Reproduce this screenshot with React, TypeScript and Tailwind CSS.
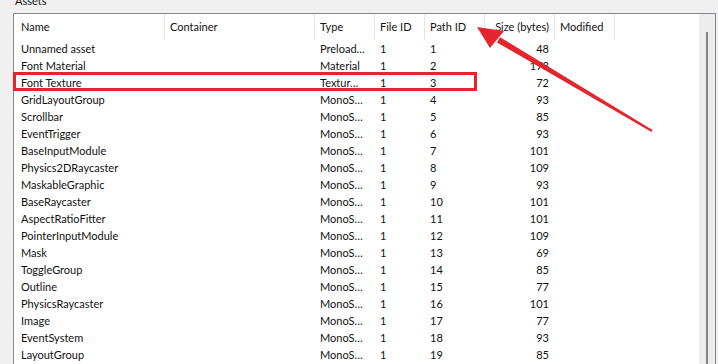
import React from "react";

type Col = { key: string; label: string; w: string; right?: boolean; pl: string };

const cols: Col[] = [
  { key: "name", label: "Name", w: "w-[151px]", pl: "pl-[7px]" },
  { key: "container", label: "Container", w: "w-[150px]", pl: "pl-[5px]" },
  { key: "type", label: "Type", w: "w-[60px]", pl: "pl-[5px]" },
  { key: "file", label: "File ID", w: "w-[50px]", pl: "pl-[5px]" },
  { key: "path", label: "Path ID", w: "w-[60px]", pl: "pl-[5px]" },
  { key: "size", label: "Size (bytes)", w: "w-[70px]", right: true, pl: "pl-[5px]" },
  { key: "modified", label: "Modified", w: "w-[60px]", pl: "pl-[5px]" },
];

const rows: [string, string, number][] = [
  ["Unnamed asset", "Preload…", 48],
  ["Font Material", "Material", 173],
  ["Font Texture", "Textur…", 72],
  ["GridLayoutGroup", "MonoS…", 93],
  ["Scrollbar", "MonoS…", 85],
  ["EventTrigger", "MonoS…", 93],
  ["BaseInputModule", "MonoS…", 101],
  ["Physics2DRaycaster", "MonoS…", 109],
  ["MaskableGraphic", "MonoS…", 93],
  ["BaseRaycaster", "MonoS…", 101],
  ["AspectRatioFitter", "MonoS…", 101],
  ["PointerInputModule", "MonoS…", 109],
  ["Mask", "MonoS…", 69],
  ["ToggleGroup", "MonoS…", 85],
  ["Outline", "MonoS…", 77],
  ["PhysicsRaycaster", "MonoS…", 101],
  ["Image", "MonoS…", 77],
  ["EventSystem", "MonoS…", 93],
  ["LayoutGroup", "MonoS…", 85],
];

const Annotations = () => (
  <svg
    className="absolute inset-0 pointer-events-none"
    width={718}
    height={364}
    viewBox="0 0 718 364"
  >
    <rect x={14.5} y={73.5} width={461} height={16} fill="none" stroke="#e3262e" strokeWidth={3} />
    <polygon points="500,37.2 497,42.4 651.5,131.9 652.5,130.1" fill="#e3262e" />
    <polygon points="477,27 504,31 490,48" fill="#e3262e" />
  </svg>
);

const App = () => {
  return (
    <div
      className="relative w-[718px] h-[364px] overflow-hidden bg-[#f0f0f0] text-[#111] text-[11px]"
      style={{ fontFamily: "Lato, 'Noto Sans', sans-serif" }}
    >
      <div className="h-[13px] overflow-hidden">
        <div className="-mt-[7px] pl-[15px] leading-[15px]">Assets</div>
      </div>
      <div className="ml-[13px] w-[703px] h-[360px] border border-[#828790] bg-white flex">
        <div className="flex-1 flex flex-col">
          {/* header */}
          <div className="flex h-[26px]">
            {cols.map((c) => (
              <div
                key={c.key}
                className={`${c.w} ${c.pl} pr-[5px] flex items-center border-r border-[#e5e5e5] whitespace-nowrap ${
                  c.right ? "justify-end" : ""
                }`}
              >
                {c.label}
              </div>
            ))}
          </div>
          {rows.map(([name, type, size], i) => (
            <div key={i} className="flex h-[17px] items-center leading-[17px] whitespace-nowrap">
              <div className="w-[151px] pl-[7px]">{name}</div>
              <div className="w-[150px] pl-[5px]"></div>
              <div className="w-[60px] pl-[5px]">{type}</div>
              <div className="w-[50px] pl-[5px]">1</div>
              <div className="w-[60px] pl-[5px]">{i + 1}</div>
              <div className="w-[70px] pr-[6px] text-right">{size}</div>
              <div className="w-[60px]"></div>
            </div>
          ))}
        </div>
        <div className="w-[16px] bg-[#ededed] pt-[18px] pl-[7px]">
          <div className="w-[2px] h-full bg-[#858585]" />
        </div>
      </div>
      <Annotations />
    </div>
  );
};

export default App;
